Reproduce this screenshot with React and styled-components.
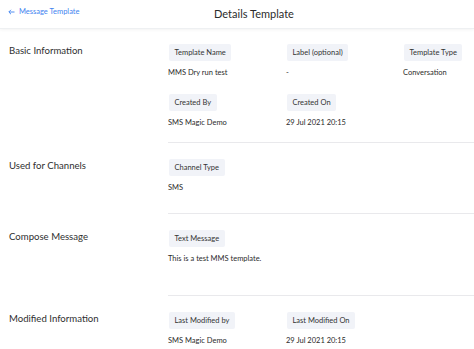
import React from "react";
import styled, { createGlobalStyle } from "styled-components";

const Global = createGlobalStyle`
  html, body { margin: 0; padding: 0; background: #fff; }
  body { font-family: Lato, "Open Sans", sans-serif; color: #333; }
`;

const Page = styled.div`
  width: 474px;
  height: 349px;
  overflow: hidden;
  background: #fff;
`;

const Header = styled.header`
  position: relative;
  height: 28px;
  display: flex;
  align-items: center;
  justify-content: center;
  border-bottom: 1px solid #eef0f2;
  box-shadow: 0 1px 3px rgba(0, 0, 0, 0.05);
`;

const BackLink = styled.a`
  position: absolute;
  left: 8px;
  top: 7px;
  display: flex;
  align-items: center;
  gap: 4px;
  font-size: 7.5px;
  color: #3f83f0;
  text-decoration: none;
`;

const Title = styled.h1`
  margin: 0 0 2px 34px;
  font-size: 11px;
  font-weight: 400;
  color: #2b2b2b;
`;

const Section = styled.section`
  display: grid;
  grid-template-columns: 168px 1fr;
  padding-top: ${(p) => p.$top}px;
`;

const SectionTitle = styled.h2`
  margin: 0;
  padding-left: 9px;
  font-size: 9.6px;
  font-weight: 400;
  line-height: 14px;
  color: #2f2f2f;
`;

const Body = styled.div`
  border-bottom: ${(p) => (p.$last ? "none" : "1px solid #e9e9ec")};
  padding-bottom: ${(p) => p.$bottom}px;
`;

const Fields = styled.div`
  display: grid;
  grid-template-columns: 118px 117px 1fr;
  row-gap: 16px;
`;

const Field = styled.div`
  display: flex;
  flex-direction: column;
  align-items: flex-start;
`;

const Chip = styled.span`
  display: inline-flex;
  align-items: center;
  height: 17px;
  padding: 0 5.5px;
  margin-left: 1px;
  background: #f1f3f8;
  border-radius: 2px;
  font-size: 7.5px;
  color: #333;
`;

const Value = styled.div`
  margin-top: 6px;
  font-size: 7.5px;
  line-height: 11px;
  color: #2b2b2b;
`;

const ArrowIcon = () => (
  <svg width="7" height="6" viewBox="0 0 7 6" fill="none">
    <path d="M6.5 3H1M3 0.8L0.8 3L3 5.2" stroke="#3f83f0" strokeWidth="0.9" />
  </svg>
);

const sections = [
  {
    title: "Basic Information",
    top: 15,
    bottom: 14,
    fields: [
      ["Template Name", "MMS Dry run test"],
      ["Label (optional)", "-"],
      ["Template Type", "Conversation"],
      ["Created By", "SMS Magic Demo"],
      ["Created On", "29 Jul 2021 20:15"],
    ],
  },
  {
    title: "Used for Channels",
    top: 16,
    bottom: 20,
    fields: [["Channel Type", "SMS"]],
  },
  {
    title: "Compose Message",
    top: 16,
    bottom: 31,
    fields: [["Text Message", "This is a test MMS template."]],
  },
  {
    title: "Modified Information",
    top: 16,
    bottom: 10,
    last: true,
    fields: [
      ["Last Modified by", "SMS Magic Demo"],
      ["Last Modified On", "29 Jul 2021 20:15"],
    ],
  },
];

export default function App() {
  return (
    <Page>
      <Global />
      <Header>
        <BackLink href="#">
          <ArrowIcon />
          Message Template
        </BackLink>
        <Title>Details Template</Title>
      </Header>
      {sections.map((s) => (
        <Section key={s.title} $top={s.top}>
          <SectionTitle>{s.title}</SectionTitle>
          <Body $bottom={s.bottom} $last={s.last}>
            <Fields>
              {s.fields.map(([label, value]) => (
                <Field key={label}>
                  <Chip>{label}</Chip>
                  <Value>{value}</Value>
                </Field>
              ))}
            </Fields>
          </Body>
        </Section>
      ))}
    </Page>
  );
}
